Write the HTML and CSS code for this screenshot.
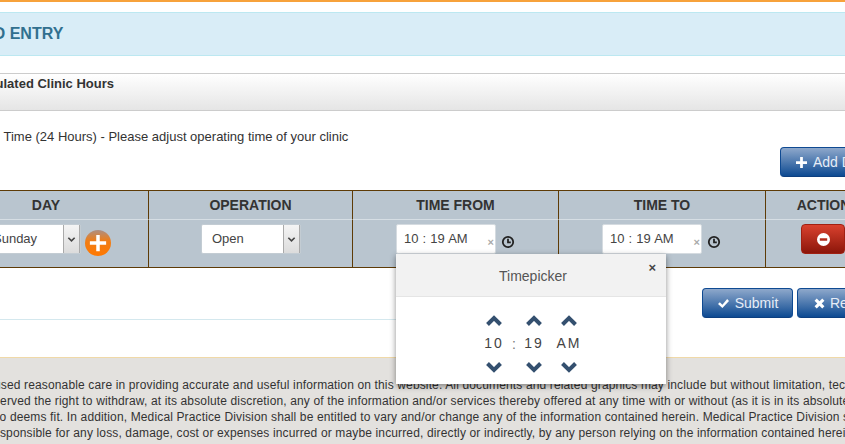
FILE: index.html
```html
<!DOCTYPE html>
<html lang="en">
<head>
<meta charset="utf-8">
<title>Clinic Hours</title>
<link rel="stylesheet" href="styles.css">
</head>
<body>
<div class="page">
  <div class="topbar"></div>
  <main class="content">
    <div class="alert">INFO ENTRY</div>
    <div class="panel-head">Regulated Clinic Hours</div>
    <p class="note">Operating Time (24 Hours) - Please adjust operating time of your clinic</p>
    <div class="add-row">
      <button class="btn btn-blue btn-add"><svg class="ico" viewBox="0 0 12 12"><path d="M4.5 0h3v4.5H12v3H7.5V12h-3V7.5H0v-3h4.5z"/></svg>Add Day</button>
    </div>
    <table class="hours">
      <thead>
        <tr><th class="c-day">DAY</th><th class="c-op">OPERATION</th><th class="c-from">TIME FROM</th><th class="c-to">TIME TO</th><th class="c-act">ACTION</th></tr>
      </thead>
      <tbody>
        <tr>
          <td>
            <div class="cell-row day-cell">
              <div class="select sel-day"><span class="sel-text">Sunday</span><span class="sel-arrow"><svg viewBox="0 0 10 7"><path d="M1.5 1.5 5 5l3.5-3.5"/></svg></span></div>
              <span class="orange-add"><svg viewBox="0 0 16 16"><path d="M6.6 1.5h2.8v5.1h5.1v2.8H9.4v5.1H6.6V9.4H1.5V6.6h5.1z"/></svg></span>
            </div>
          </td>
          <td>
            <div class="cell-row op-cell">
              <div class="select sel-op"><span class="sel-text">Open</span><span class="sel-arrow"><svg viewBox="0 0 10 7"><path d="M1.5 1.5 5 5l3.5-3.5"/></svg></span></div>
            </div>
          </td>
          <td>
            <div class="cell-row time-cell">
              <div class="time-input"><span>10 : 19 AM</span><i class="clear">×</i>
                <div class="picker">
                  <div class="picker-head"><span>Timepicker</span><b class="picker-close">×</b></div>
                  <div class="picker-body">
                    <div class="pc pc-h">
                      <svg class="chev" viewBox="0 0 18 12"><path d="M2.5 9.5 9 3l6.5 6.5"/></svg><span>10</span><svg class="chev" viewBox="0 0 18 12"><path d="M2.5 2.5 9 9l6.5-6.5"/></svg>
                    </div>
                    <span class="pc-sep">:</span>
                    <div class="pc pc-m">
                      <svg class="chev" viewBox="0 0 18 12"><path d="M2.5 9.5 9 3l6.5 6.5"/></svg><span>19</span><svg class="chev" viewBox="0 0 18 12"><path d="M2.5 2.5 9 9l6.5-6.5"/></svg>
                    </div>
                    <div class="pc pc-a">
                      <svg class="chev" viewBox="0 0 18 12"><path d="M2.5 9.5 9 3l6.5 6.5"/></svg><span>AM</span><svg class="chev" viewBox="0 0 18 12"><path d="M2.5 2.5 9 9l6.5-6.5"/></svg>
                    </div>
                  </div>
                </div>
              </div>
              <svg class="clock" viewBox="0 0 14 14"><circle cx="7" cy="7" r="5.2"/><path d="M7 3.8V7.4H9.8"/></svg>
            </div>
          </td>
          <td>
            <div class="cell-row time-cell">
              <div class="time-input"><span>10 : 19 AM</span><i class="clear">×</i></div>
              <svg class="clock" viewBox="0 0 14 14"><circle cx="7" cy="7" r="5.2"/><path d="M7 3.8V7.4H9.8"/></svg>
            </div>
          </td>
          <td class="act-cell">
            <button class="btn btn-red"><svg class="ico-minus" viewBox="0 0 12 12"><path fill-rule="evenodd" d="M6 0a6 6 0 1 1 0 12A6 6 0 0 1 6 0zM2.6 4.9v2.2h6.8V4.9z"/></svg></button>
          </td>
        </tr>
      </tbody>
    </table>
    <div class="actions">
      <button class="btn btn-blue btn-submit"><svg class="ico ico-check" viewBox="0 0 14 12"><path d="M1 6.6 3 4.6l2.8 2.8L11 1.2l2 2L5.8 11z"/></svg>Submit</button>
      <button class="btn btn-blue btn-reset"><svg class="ico ico-x" viewBox="0 0 12 12"><path d="M3 .6 6 3.6 9 .6 11.4 3 8.4 6l3 3L9 11.4l-3-3-3 3L.6 9l3-3-3-3z"/></svg>Reset</button>
    </div>
    <div class="rule"></div>
  </main>
  <footer class="disclaimer">
    <div class="l1">used reasonable care in providing accurate and useful information on this website. All documents and related graphics may include but without limitation, technical</div>
    <div class="l2">reserved the right to withdraw, at its absolute discretion, any of the information and/or services thereby offered at any time with or without (as it is in its absolute discretion</div>
    <div class="l3">who deems fit. In addition, Medical Practice Division shall be entitled to vary and/or change any of the information contained herein. Medical Practice Division shall not</div>
    <div class="l4">responsible for any loss, damage, cost or expenses incurred or maybe incurred, directly or indirectly, by any person relying on the information contained herein.</div>
  </footer>
</div>
</body>
</html>
```
FILE: styles.css
```css
* { box-sizing: border-box; }
html, body { margin: 0; padding: 0; background: #fff; }
body { font-family: "Liberation Sans", Arial, sans-serif; font-size: 13px; color: #333; }
.page { width: 845px; height: 444px; overflow: hidden; display: flex; flex-direction: column; }
.topbar { flex: none; height: 2px; background: #f7a23b; }
.content { flex: none; width: 945px; margin-left: -56px; }

.alert { margin-top: 10px; height: 44px; padding: 0 0 0 23px; line-height: 42px; background: #d9edf7; border: 1px solid #bce8f1; border-width: 1px 0; color: #31708f; font-size: 16px; font-weight: 700; }
.panel-head { margin-top: 17px; height: 38px; padding: 2px 0 0 27px; line-height: 15px; background: linear-gradient(#fff, #e5e5e5); border: 1px solid #ccc; border-width: 1px 0; font-weight: 700; color: #333; }
.note { margin: 0; padding: 17px 0 0 0; height: 36px; line-height: 18px; color: #333; text-indent: -1px; }
.add-row { display: flex; justify-content: flex-end; padding-right: 9px; height: 43px; }

.btn { display: inline-flex; align-items: center; justify-content: center; height: 30px; padding: 0; border: 1px solid #0f4a92; border-bottom-color: #0d3f80; border-radius: 4px; font: 14px "Liberation Sans", Arial, sans-serif; color: #e6edf7; }
.btn-blue { background: linear-gradient(#8ea8cb, #0d4a92); }
.btn-add { width: 100px; gap: 6px; justify-content: flex-start; padding-left: 15px; }
.btn-submit { width: 91px; gap: 5px; }
.btn-reset { width: 87px; gap: 5px; justify-content: flex-start; padding-left: 16px; }
.btn-red { width: 44px; background: linear-gradient(#d9412e, #8c160a); border-color: #a02012; }
.ico { width: 11px; height: 11px; fill: #fff; flex: none; }
.ico-check { width: 13px; height: 11px; }
.ico-minus { width: 13px; height: 13px; fill: #fff; }

.hours { width: 937px; table-layout: fixed; border-collapse: separate; border-spacing: 0; background: #b9c5cf; border-top: 1px solid #5e3b06; border-bottom: 1px solid #5e3b06; }
.c-day { width: 205px; }
.c-op { width: 204px; }
.c-from { width: 206px; }
.c-to { width: 207px; }
.hours th { height: 29px; padding: 0; border-bottom: 1px solid #d6dee4; border-right: 1px solid #5e3b06; font-size: 14px; font-weight: 700; color: #333; text-align: center; vertical-align: middle; }
.hours td { height: 47px; padding: 0; border-right: 1px solid #5e3b06; vertical-align: top; }
.hours th:last-child, .hours td:last-child { border-right: 0; }
.cell-row { display: flex; align-items: flex-start; padding-top: 4px; }
.day-cell { padding-left: 26px; }
.op-cell { padding-left: 52px; }
.time-cell { padding-left: 43px; }
.act-cell { padding: 4px 0 0 35px !important; }

.select { display: flex; height: 30px; background: #fff; border: 1px solid #c3ccd3; border-radius: 2px; font-size: 13px; color: #444; }
.sel-day { width: 111px; }
.sel-op { width: 100px; }
.sel-text { flex: 1; line-height: 27px; padding-left: 10px; }
.sel-day .sel-text { padding-left: 22px; }
.sel-arrow { flex: none; width: 17px; display: flex; align-items: center; justify-content: center; background: linear-gradient(#f4f4f4, #dcdcdc); border-left: 1px solid #aaa; border-right: 1px solid #aaa; }
.sel-arrow svg { width: 9px; height: 7px; fill: none; stroke: #444; stroke-width: 1.8; }
.orange-add { margin: 6px 0 0 4px; width: 26px; height: 26px; border-radius: 50%; display: flex; align-items: center; justify-content: center; background: linear-gradient(#ac8f84 0, #f07d16 42%, #ff7800 100%); }
.orange-add svg { width: 20px; height: 20px; fill: #fff; }

.time-input { position: relative; width: 100px; height: 30px; background: #fff; border: 1px solid #d5dbe0; border-radius: 2px; font-size: 13px; color: #444; line-height: 27px; padding-left: 7px; word-spacing: .5px; }
.clear { position: absolute; right: 1px; top: 9px; font-style: normal; font-size: 11px; line-height: 16px; color: #aaa; font-weight: 700; }
.clock { flex: none; width: 14px; height: 14px; margin: 11px 0 0 5px; fill: none; stroke: #222; stroke-width: 1.8; }

.picker { position: absolute; left: -1px; top: 29px; width: 270px; height: 130px; background: #fff; box-shadow: 0 2px 6px rgba(0,0,0,.45); z-index: 5; color: #555; word-spacing: 0; }
.picker-head { position: relative; height: 43px; padding-left: 4px; background: #f2f2f2; border-bottom: 1px solid #e5e5e5; text-align: center; font-size: 14px; line-height: 44px; color: #555; }
.picker-close { position: absolute; right: 10px; top: -8px; font-size: 13px; color: #444; }
.picker-body { display: flex; justify-content: flex-start; padding: 18px 0 0 86px; }
.pc { display: flex; flex-direction: column; align-items: center; width: 24px; font-size: 14px; letter-spacing: 2px; color: #444; }
.pc span { display: block; height: 34px; line-height: 33px; white-space: nowrap; }
.pc-sep { width: 16px; text-align: center; padding-top: 18px; line-height: 22px; font-size: 14px; color: #777; }
.pc-a { margin-left: 11px; }
.chev { width: 18px; height: 12px; flex: none; fill: none; stroke: #34506f; stroke-width: 4; }

.actions { display: flex; justify-content: flex-end; gap: 4px; padding: 20px 0 0; margin-right: 5px; height: 51px; }
.rule { height: 1px; background: #d4e8ee; width: 690px; margin-left: 0; }

.disclaimer { flex: none; margin-top: 37px; height: 100px; padding-top: 19px; background: #e3e1de; border-top: 1px solid #f0d9a8; line-height: 16px; font-size: 12px; letter-spacing: .14px; color: #333; white-space: nowrap; }
.l1 { margin-left: -6px; }
.l2 { margin-left: -17px; }
.l3 { margin-left: -16px; }
.l4 { margin-left: -11px; }
```
